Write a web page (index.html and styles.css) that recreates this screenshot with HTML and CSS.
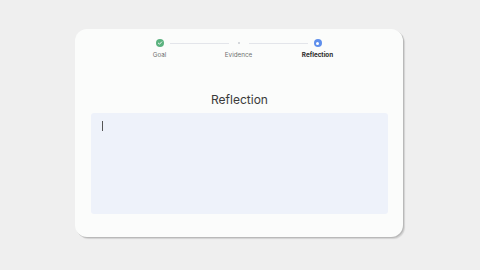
FILE: index.html
```html
<!DOCTYPE html>
<html>
<head>
<meta charset="utf-8">
<link rel="stylesheet" href="styles.css">
</head>
<body>
<div class="page">
  <div class="card">
    <div class="stepper">
      <div class="step">
        <span class="dot done">
          <svg viewBox="0 0 8 8" width="8" height="8"><path d="M2.3 4.1 L3.5 5.2 L5.7 2.9" fill="none" stroke="#fff" stroke-width="0.9" stroke-linecap="round" stroke-linejoin="round"/></svg>
        </span>
        <span class="label">Goal</span>
      </div>
      <div class="line"></div>
      <div class="step">
        <span class="dot pending"></span>
        <span class="label">Evidence</span>
      </div>
      <div class="line"></div>
      <div class="step">
        <span class="dot current"><span class="inner"></span></span>
        <span class="label active">Reflection</span>
      </div>
    </div>
    <h2 class="title">Reflection</h2>
    <div class="field"><span class="caret"></span></div>
  </div>
</div>
</body>
</html>
```
FILE: styles.css
```css
html, body {
  margin: 0;
  padding: 0;
}
body {
  width: 480px;
  height: 270px;
  background: #efefef;
  font-family: Inter, "Noto Sans", sans-serif;
  overflow: hidden;
}
.page {
  padding: 29px 0 0 75px;
}
.card {
  width: 328px;
  height: 208px;
  box-sizing: border-box;
  background: #fbfcfb;
  border-radius: 12px;
  box-shadow: 1px 1px 0 #b9b9b9, 2px 2px 1px rgba(0,0,0,0.12);
  padding: 10px 15px 0 16px;
  display: flex;
  flex-direction: column;
}
.stepper {
  display: flex;
  justify-content: center;
  align-items: flex-start;
  margin-left: -2px;
}
.step {
  width: 40px;
  display: flex;
  flex-direction: column;
  align-items: center;
  position: relative;
  z-index: 1;
}
.dot {
  width: 8px;
  height: 8px;
  border-radius: 50%;
  display: flex;
  align-items: center;
  justify-content: center;
}
.dot.done {
  background: #5bb27f;
}
.dot.pending::before {
  content: "";
  width: 2px;
  height: 2px;
  border-radius: 50%;
  background: #c9ccd2;
}
.dot.current {
  background: #5f8fec;
}
.dot.current .inner {
  width: 3px;
  height: 3px;
  border-radius: 50%;
  background: #fff;
}
.line {
  width: 59px;
  height: 1px;
  margin: 4px -10px 0;
  background: #e3e5ea;
}
.label {
  margin-top: 4px;
  font-size: 6.3px;
  color: #707070;
  white-space: nowrap;
}
.label.active {
  color: #2a2a2a;
  font-weight: 700;
}
.title {
  margin: 33px 0 0;
  text-align: center;
  font-size: 12px;
  font-weight: 400;
  color: #3a3a3a;
  line-height: 15px;
}
.field {
  margin-top: 6px;
  height: 101px;
  background: #eef2fa;
  border-radius: 3px;
  padding: 8px 11px;
  box-sizing: border-box;
}
.caret {
  display: block;
  width: 1px;
  height: 10px;
  background: #555;
}
```
